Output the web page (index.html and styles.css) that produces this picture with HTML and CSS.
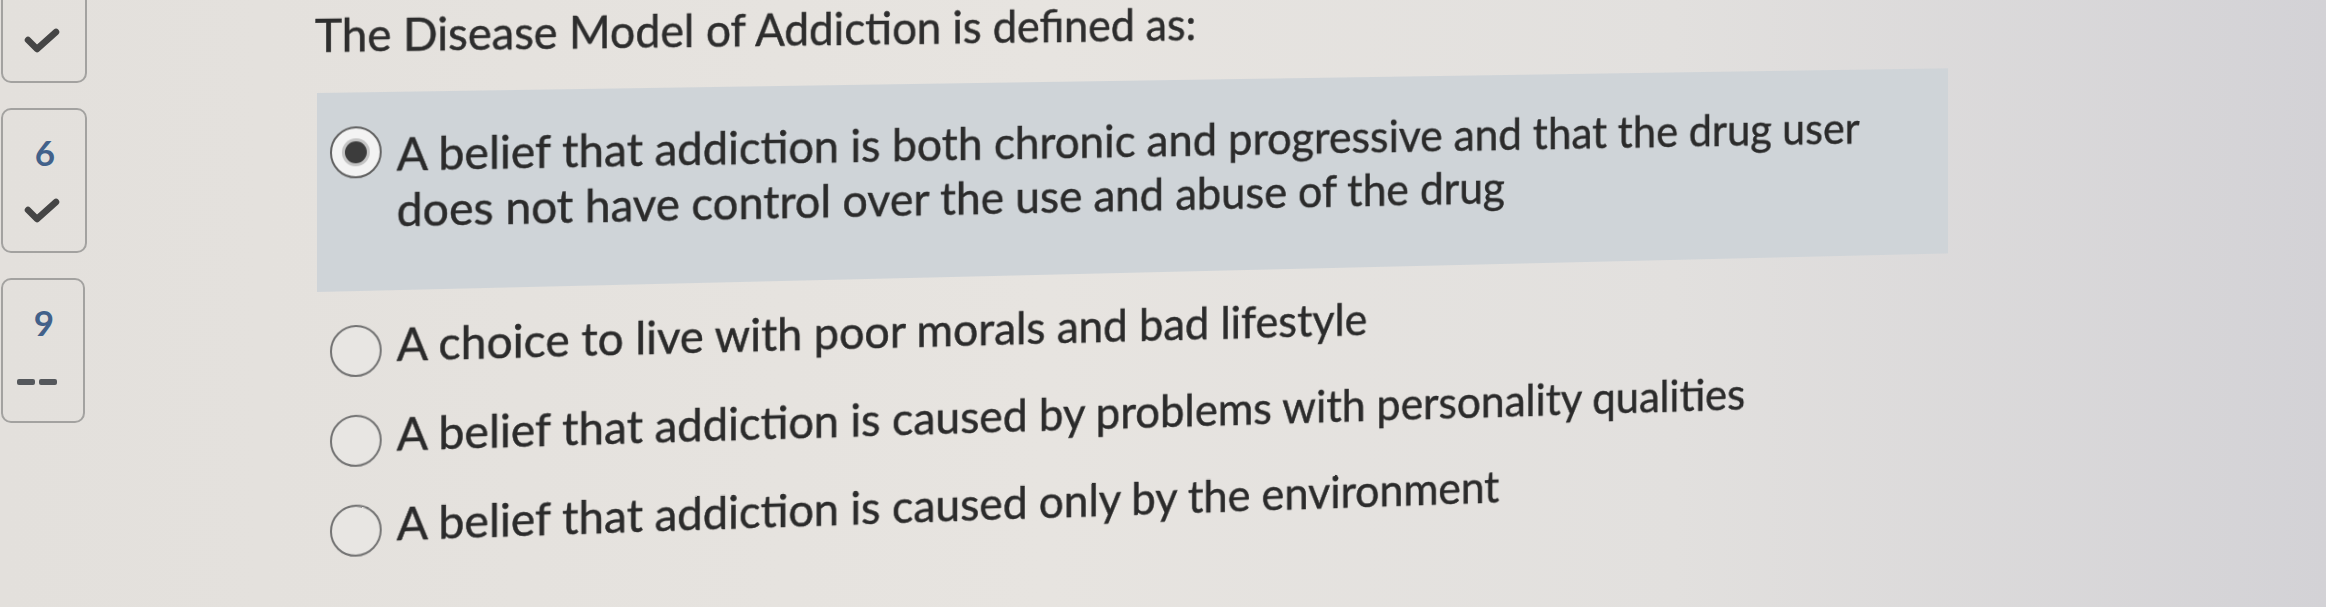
FILE: index.html
```html
<!DOCTYPE html>
<html lang="en">
<head>
<meta charset="utf-8">
<title>Quiz question</title>
<link rel="stylesheet" href="styles.css">
</head>
<body>
<div class="page">
  <aside class="nav">
    <div class="qcard qcard-first">
      <span class="qnum">5</span>
      <svg class="check" viewBox="0 0 36 26" width="36" height="26"><path d="M4 12 L13 21 L32 4"/></svg>
    </div>
    <div class="qcard">
      <span class="qnum">6</span>
      <svg class="check" viewBox="0 0 36 26" width="36" height="26"><path d="M4 12 L13 21 L32 4"/></svg>
    </div>
    <div class="qcard qcard-narrow">
      <span class="qnum">9</span>
      <span class="dashes"><i></i><i></i></span>
    </div>
  </aside>
  <main class="question">
    <h2 class="qtext">The Disease Model of Addiction is defined as:</h2>
    <div class="answers">
      <label class="answer selected">
        <span class="radio checked"></span>
        <span class="atext">A belief that addiction is both chronic and progressive and that the drug user<br>does not have control over the use and abuse of the drug</span>
      </label>
      <label class="answer">
        <span class="radio"></span>
        <span class="atext">A choice to live with poor morals and bad lifestyle</span>
      </label>
      <label class="answer">
        <span class="radio"></span>
        <span class="atext">A belief that addiction is caused by problems with personality qualities</span>
      </label>
      <label class="answer">
        <span class="radio"></span>
        <span class="atext">A belief that addiction is caused only by the environment</span>
      </label>
    </div>
  </main>
</div>
</body>
</html>
```
FILE: styles.css
```css
html, body {
  margin: 0;
  padding: 0;
  height: 607px;
  overflow: hidden;
}
body {
  font-family: Lato, "Open Sans", sans-serif;
  color: #2b2b2b;
  background: linear-gradient(90deg, #e3e0dc 0%, #e7e4e0 45%, #e2e0de 72%, #d3d2d6 100%);
}
.page {
  display: flex;
  align-items: flex-start;
}
.nav {
  width: 86px;
  margin-left: 1px;
  margin-top: -62px;
  display: flex;
  flex-direction: column;
  gap: 25px;
}
.qcard {
  box-sizing: border-box;
  height: 145px;
  border: 2px solid #a3a2a0;
  border-radius: 10px;
  display: flex;
  flex-direction: column;
  align-items: center;
  padding-top: 25px;
}
.qcard-narrow {
  width: 84px;
}
.qnum {
  font-size: 35px;
  line-height: 34px;
  font-weight: 700;
  color: #42618a;
  margin-left: 2px;
}
.check {
  margin-top: 29px;
  margin-right: 4px;
  fill: none;
  stroke: #454545;
  stroke-width: 6.5;
  stroke-linecap: round;
  stroke-linejoin: round;
}
.dashes {
  margin-top: 40px;
  margin-right: 12px;
  display: flex;
  gap: 4px;
}
.dashes i {
  display: block;
  width: 18px;
  height: 6px;
  border-radius: 2px;
  background: #55585c;
}
.question {
  margin-left: 225px;
  padding-top: 9px;
  transform-origin: 5px -262px;
  transform: perspective(1228px) rotateY(3deg);
}
.qtext {
  margin: 0 0 0 3px;
  font-size: 46px;
  line-height: 52px;
  font-weight: 400;
  color: #2d2d2d;
  -webkit-text-stroke: 0.5px #2d2d2d;
}
.answers {
  margin-top: 32px;
  margin-left: 5px;
  display: flex;
  flex-direction: column;
}
.answer {
  display: flex;
  align-items: flex-start;
  gap: 15px;
  padding: 16px 10px 18px 13px;
  font-size: 47px;
  line-height: 56px;
  -webkit-text-stroke: 0.5px #2b2b2b;
}
.answer.selected {
  width: 1755px;
  box-sizing: border-box;
  background: #cfd4d8;
  padding-top: 33px;
  padding-bottom: 54px;
  margin-bottom: 9px;
}
.radio {
  flex: none;
  box-sizing: border-box;
  width: 52px;
  height: 52px;
  margin-top: 9px;
  margin-bottom: -9px;
  border: 2.5px solid #727272;
  border-radius: 50%;
  background: #e8e6e3;
  display: flex;
  align-items: center;
  justify-content: center;
}
.radio.checked {
  margin-top: 1px;
  margin-bottom: 0;
  border-color: #606060;
  background: #f3f3f3;
}
.radio.checked::after {
  content: "";
  width: 22px;
  height: 22px;
  border-radius: 50%;
  background: #3c3c3c;
  box-shadow: 0 0 0 3px #c4c4c4;
}
.atext {
  white-space: nowrap;
}
```
